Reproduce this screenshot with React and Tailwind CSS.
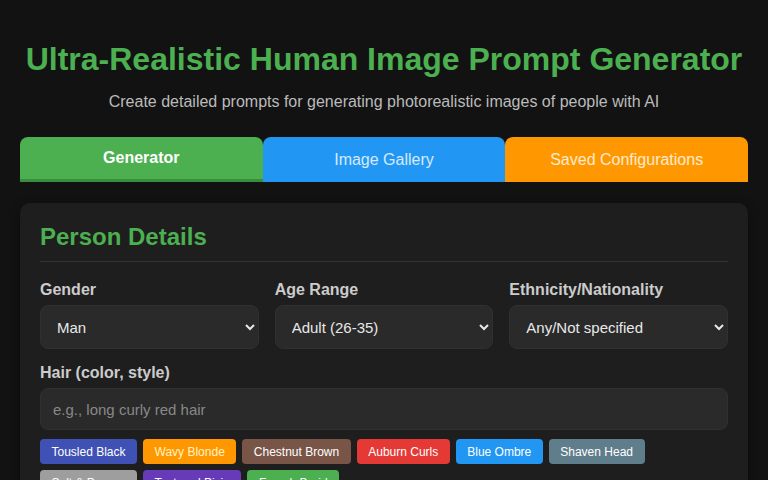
import React, { useState } from 'react';

const hairPresets = [
  { label: 'Tousled Black', cls: 'bg-[#3f51b5] text-white' },
  { label: 'Wavy Blonde', cls: 'bg-[#ff9800] text-[#fff3c4]' },
  { label: 'Chestnut Brown', cls: 'bg-[#795548] text-white' },
  { label: 'Auburn Curls', cls: 'bg-[#e53935] text-white' },
  { label: 'Blue Ombre', cls: 'bg-[#2196f3] text-white' },
  { label: 'Shaven Head', cls: 'bg-[#607d8b] text-white' },
  { label: 'Salt & Pepper', cls: 'bg-[#9e9e9e] text-white' },
  { label: 'Textured Pixie', cls: 'bg-[#673ab7] text-white' },
  { label: 'French Braid', cls: 'bg-[#4caf50] text-white' },
];

const tabs = [
  { id: 'generator', label: 'Generator', cls: 'bg-[#4caf50]', activeCls: 'border-b-[3px] border-[#388e3c]' },
  { id: 'gallery', label: 'Image Gallery', cls: 'bg-[#2196f3]', activeCls: 'border-b-[3px] border-[#1976d2]' },
  { id: 'saved', label: 'Saved Configurations', cls: 'bg-[#ff9800]', activeCls: 'border-b-[3px] border-[#f57c00]' },
];

function Field({ label, children }) {
  return (
    <div className="flex flex-col">
      <label className="mb-[6px] text-[16px] leading-[18px] font-bold text-[#cccccc]">{label}</label>
      {children}
    </div>
  );
}

function Select({ value, onChange, options }) {
  return (
    <select
      value={value}
      onChange={(e) => onChange(e.target.value)}
      className="h-[44px] w-full rounded-lg border border-[#303030] bg-[#2a2a2a] px-3 text-[15px] text-[#e8e8e8] [color-scheme:dark] outline-none"
    >
      {options.map((o) => (
        <option key={o} value={o}>{o}</option>
      ))}
    </select>
  );
}

export default function App() {
  const [activeTab, setActiveTab] = useState('generator');
  const [gender, setGender] = useState('Man');
  const [age, setAge] = useState('Adult (26-35)');
  const [ethnicity, setEthnicity] = useState('Any/Not specified');
  const [hair, setHair] = useState('');

  return (
    <div className="min-h-screen bg-[#121212] px-5 pt-[41px] font-['Liberation_Sans',Arial,sans-serif] text-[#e0e0e0]">
      <h1 className="text-center text-[32px] leading-[37px] font-bold text-[#4caf50]">
        Ultra-Realistic Human Image Prompt Generator
      </h1>
      <p className="mt-[15px] text-center text-[16px] leading-[18px] text-[#bbbbbb]">
        Create detailed prompts for generating photorealistic images of people with AI
      </p>

      <div className="mt-[26px] grid grid-cols-3">
        {tabs.map((t) => (
          <button
            key={t.id}
            onClick={() => setActiveTab(t.id)}
            className={`flex h-[45px] items-center justify-center rounded-t-lg text-[16px] ${t.cls} ${
              activeTab === t.id ? `font-bold text-white ${t.activeCls}` : 'text-white/80'
            }`}
          >
            {t.label}
          </button>
        ))}
      </div>

      <div className="mt-[21px] rounded-[10px] bg-[#1e1e1e] p-5 shadow-[0_4px_12px_rgba(0,0,0,0.4)]">
        <h2 className="border-b border-[#333] pb-[10px] text-[24px] leading-[28px] font-bold text-[#4caf50]">
          Person Details
        </h2>

        <div className="mt-[19px] grid grid-cols-3 gap-4">
          <Field label="Gender">
            <Select value={gender} onChange={setGender} options={['Man', 'Woman', 'Non-binary']} />
          </Field>
          <Field label="Age Range">
            <Select
              value={age}
              onChange={setAge}
              options={['Young Adult (18-25)', 'Adult (26-35)', 'Middle-aged (36-50)', 'Senior (50+)']}
            />
          </Field>
          <Field label="Ethnicity/Nationality">
            <Select
              value={ethnicity}
              onChange={setEthnicity}
              options={['Any/Not specified', 'East Asian', 'South Asian', 'African', 'European', 'Latino']}
            />
          </Field>
        </div>

        <div className="mt-[15px]">
          <Field label="Hair (color, style)">
            <input
              type="text"
              value={hair}
              onChange={(e) => setHair(e.target.value)}
              placeholder="e.g., long curly red hair"
              className="h-[42px] w-full rounded-lg border border-[#303030] bg-[#2a2a2a] px-3 text-[15px] text-[#e8e8e8] placeholder:text-[#888] outline-none"
            />
          </Field>
          <div className="mt-[9px] flex flex-wrap gap-[6px]">
            {hairPresets.map((p) => (
              <button
                key={p.label}
                onClick={() => setHair(p.label.toLowerCase())}
                className={`h-[25px] rounded px-[11.5px] text-[12px] ${p.cls}`}
              >
                {p.label}
              </button>
            ))}
          </div>
        </div>
      </div>
    </div>
  );
}
